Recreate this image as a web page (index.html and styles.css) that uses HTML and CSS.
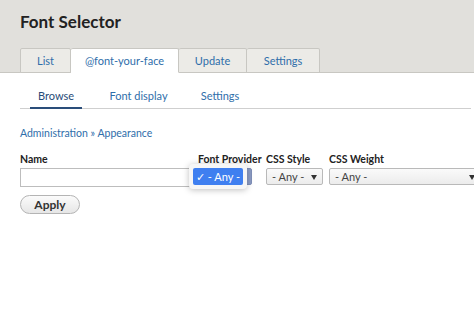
FILE: index.html
```html
<!DOCTYPE html>
<html lang="en">
<head>
    <meta charset="UTF-8">
    <title>Font Selector</title>
    <link rel="stylesheet" href="styles.css">
</head>
<body>
    <div class="header">
        <h1>Font Selector</h1>
        <ul class="tabs">
            <li><a href="#">List</a></li>
            <li class="active"><a href="#">@font-your-face</a></li>
            <li><a href="#">Update</a></li>
            <li><a href="#">Settings</a></li>
        </ul>
    </div>

    <div class="content">
        <ul class="subtabs">
            <li class="active"><a href="#">Browse</a></li>
            <li><a href="#">Font display</a></li>
            <li><a href="#">Settings</a></li>
        </ul>

        <div class="breadcrumb">
            <a href="#">Administration</a> » <a href="#">Appearance</a>
        </div>

        <div class="filters">
            <div class="field field-name">
                <label>Name</label>
                <div class="text-input"></div>
            </div>
            <div class="field field-provider">
                <label>Font Provider</label>
                <div class="select select-open"></div>
                <div class="popup">
                    <div class="option">✓ - Any -</div>
                </div>
            </div>
            <div class="field field-style">
                <label>CSS Style</label>
                <div class="select">- Any - <span class="arrow"></span></div>
            </div>
            <div class="field field-weight">
                <label>CSS Weight</label>
                <div class="select">- Any - <span class="arrow"></span></div>
            </div>
        </div>

        <button class="apply">Apply</button>
    </div>
</body>
</html>
```

FILE: styles.css
```css
* {
    margin: 0;
    padding: 0;
    box-sizing: border-box;
    font-family: 'Lato', 'Open Sans', sans-serif;
}

body {
    background: #fff;
    color: #333;
    width: 474px;
    height: 334px;
    overflow: hidden;
}

a {
    color: #2f6eaa;
    text-decoration: none;
}

.header {
    background: #e1e0dc;
    padding: 12px 0 0 20px;
    border-bottom: 1px solid #c8c7c2;
}

h1 {
    font-size: 17px;
    font-weight: 700;
    color: #222;
    line-height: 20px;
    margin-bottom: 16px;
}

.tabs {
    list-style: none;
    display: flex;
    margin-bottom: -1px;
}

.tabs li {
    background: #ecebe7;
    border: 1px solid #c8c7c2;
    border-left: none;
    border-radius: 2px 2px 0 0;
    height: 25px;
}

.tabs li:first-child {
    border-left: 1px solid #c8c7c2;
}

.tabs li.active {
    background: #fff;
    border-bottom-color: #fff;
}

.tabs a {
    display: block;
    font-size: 11px;
    line-height: 23px;
    text-align: center;
}

.tabs li:nth-child(1) { width: 51px; }
.tabs li:nth-child(2) { width: 108px; }
.tabs li:nth-child(3) { width: 68px; }
.tabs li:nth-child(4) { width: 73px; }

.content {
    padding-left: 20px;
}

.subtabs {
    list-style: none;
    display: flex;
    border-bottom: 1px solid #cfcfcf;
    margin-top: 11px;
    margin-right: 3px;
}

.subtabs li {
    padding-bottom: 3px;
    border-bottom: 2px solid transparent;
    margin-bottom: -1px;
    text-align: center;
    flex-shrink: 0;
}

.subtabs li:nth-child(1) { width: 52px; margin-left: 10px; }
.subtabs li:nth-child(2) { width: 73px; margin-left: 20px; }
.subtabs li:nth-child(3) { width: 56px; margin-left: 17px; }

.subtabs li.active {
    border-bottom-color: #2a4d7a;
}

.subtabs a {
    font-size: 11px;
    line-height: 16px;
}

.subtabs li.active a {
    color: #284a78;
}

.breadcrumb {
    margin-top: 16px;
    font-size: 10.5px;
    line-height: 16px;
    color: #2f6eaa;
}

.filters {
    display: flex;
    margin-top: 11px;
}

.field {
    position: relative;
    flex-shrink: 0;
}

.field label {
    display: block;
    font-size: 10.5px;
    font-weight: 700;
    line-height: 14px;
    color: #222;
    margin-bottom: 2px;
    white-space: nowrap;
}

.field-name { width: 178px; }
.field-provider { width: 68px; }
.field-style { width: 63px; }
.field-weight { width: 152px; }

.text-input {
    width: 174px;
    height: 19px;
    border: 1px solid #bdbdbd;
    background: #fff;
}

.select {
    height: 17px;
    margin-top: 1px;
    border: 1px solid #b9b9b9;
    border-radius: 2px;
    background: linear-gradient(#fafafa, #ececec);
    font-size: 11px;
    line-height: 15px;
    color: #444;
    padding-left: 5px;
    position: relative;
}

.field-provider .select { width: 54px; }
.field-style .select { width: 57px; }
.field-weight .select { width: 152px; }

.select-open {
    background: #8c9cc4;
    border-color: #7f8fb8;
}

.arrow {
    position: absolute;
    right: 5px;
    top: 6px;
    border-left: 3px solid transparent;
    border-right: 3px solid transparent;
    border-top: 5px solid #333;
}

.popup {
    position: absolute;
    left: -9px;
    top: 12px;
    width: 58px;
    height: 25px;
    background: #f6f6f6;
    border-radius: 4px;
    box-shadow: 0 1px 6px rgba(0, 0, 0, 0.25);
    padding: 4px 4px 3px;
}

.option {
    background: #3f7ff0;
    color: #fff;
    font-size: 11px;
    line-height: 17px;
    height: 17px;
    border-radius: 2px;
    padding-left: 3px;
}

.apply {
    margin-top: 8px;
    width: 60px;
    height: 19px;
    border: 1px solid #b4b4b4;
    border-radius: 10px;
    background: linear-gradient(#fbfbfb, #e6e6e6);
    font-size: 12px;
    font-weight: 700;
    color: #333;
}
```
